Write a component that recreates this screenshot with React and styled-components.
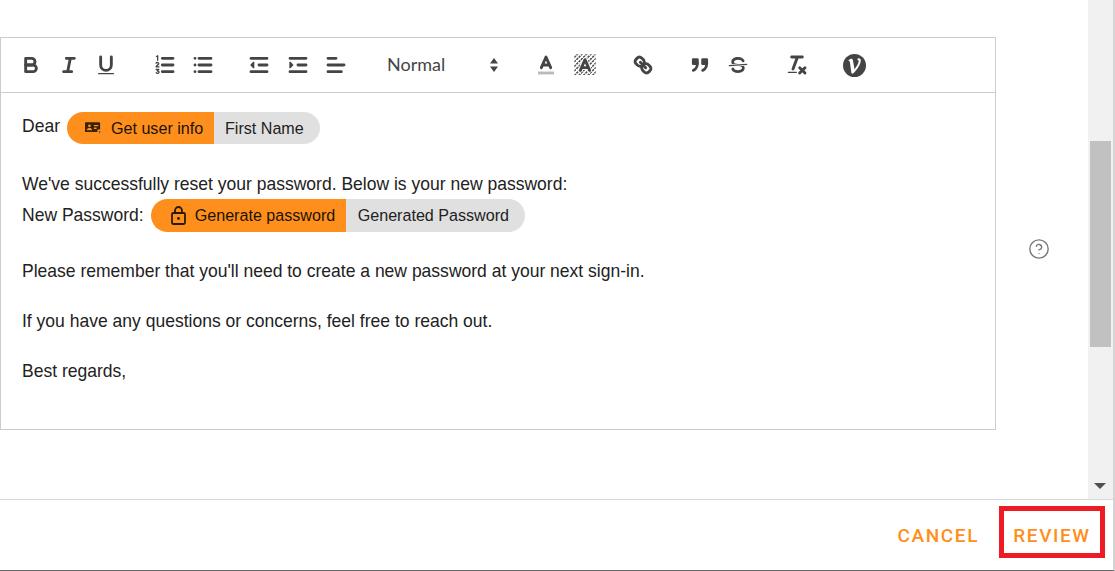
import React from 'react';
import styled, { createGlobalStyle } from 'styled-components';
import { CircleHelp } from 'lucide-react';

const GlobalStyle = createGlobalStyle`
  html, body {
    margin: 0;
    padding: 0;
    background: #fff;
    overflow: hidden;
  }
`;

const ink = '#444';
const orange = '#ff8f1c';

const Page = styled.div`
  width: 1115px;
  height: 571px;
  display: flex;
  flex-direction: column;
  box-sizing: border-box;
  border-right: 2px solid #d4d4d4;
  border-bottom: 1px solid #666;
  font-family: 'Liberation Sans', Arial, sans-serif;
  color: #222;
`;

const Scroller = styled.div`
  height: 499px;
  display: flex;
  flex-shrink: 0;
`;

const Body = styled.div`
  flex: 1;
  display: flex;
  align-items: flex-start;
  padding-top: 37px;
`;

const Editor = styled.div`
  width: 996px;
  height: 393px;
  box-sizing: border-box;
  border: 1px solid #ccc;
`;

const Toolbar = styled.div`
  height: 55px;
  box-sizing: border-box;
  border-bottom: 1px solid #ccc;
  padding-left: 18px;
  display: flex;
  align-items: center;
`;

const Group = styled.div`
  display: flex;
  gap: ${(p) => p.$gap || 14}px;
  margin-left: ${(p) => p.$before || 0}px;
`;

const Tool = styled.svg.attrs({ viewBox: '0 0 18 18' })`
  width: 24px;
  height: 24px;
  display: block;
  flex-shrink: 0;
  fill: none;
  stroke: ${ink};
  stroke-width: 2.15;
  stroke-linecap: round;
  stroke-linejoin: round;

  .fill {
    fill: ${ink};
    stroke: none;
  }
  .solid {
    fill: ${ink};
  }
  .thin {
    stroke-width: 1;
  }
`;

const Picker = styled.div`
  width: 118px;
  margin-left: 39px;
  display: flex;
  align-items: center;
  justify-content: space-between;
  font-family: Lato, sans-serif;
  font-size: 18px;
  color: ${ink};
`;

const PickerLabel = styled.span`
  padding-bottom: 3px;
`;

const PickerArrows = styled.svg.attrs({ viewBox: '0 0 10 16' })`
  width: 10px;
  height: 16px;
  fill: ${ink};
  margin-right: 6px;
`;

const VideoBadge = styled.svg.attrs({ viewBox: '0 0 22 22' })`
  width: 23px;
  height: 23px;
  display: block;
`;

const Content = styled.div`
  padding: 19px 0 0 21px;
  font-size: 17.53px;
`;

const Line = styled.div`
  display: flex;
  align-items: center;
  min-height: ${(p) => p.$height || 25}px;
  margin-bottom: ${(p) => p.$after || 0}px;
  line-height: 25px;
`;

const Label = styled.span`
  padding-bottom: ${(p) => p.$lift || 0}px;
`;

const Chip = styled.span`
  display: inline-flex;
  height: ${(p) => p.$height || 32}px;
  margin-left: 7px;
  border-radius: 17px;
  overflow: hidden;
  line-height: 1;
  font-size: 16.12px;

  > span {
    padding-top: ${(p) => p.$drop || 0}px;
  }
`;

const ChipAction = styled.span`
  display: flex;
  align-items: center;
  gap: ${(p) => p.$gap}px;
  padding-left: ${(p) => p.$pad}px;
  width: ${(p) => p.$width}px;
  box-sizing: border-box;
  background: ${orange};
  color: #1c1306;
`;

const ChipValue = styled.span`
  display: flex;
  align-items: center;
  padding-left: ${(p) => p.$pad}px;
  width: ${(p) => p.$width}px;
  box-sizing: border-box;
  background: #e0e0e0;
  color: #222;
`;

const HelpSlot = styled.div`
  width: 92px;
  padding: 201px 0 0 32px;
  box-sizing: border-box;
  color: #777;

  svg {
    display: block;
  }
`;

const Track = styled.div`
  width: 25px;
  background: #f1f1f1;
  display: flex;
  flex-direction: column;
  align-items: center;
  padding-top: 141px;
  box-sizing: border-box;
  position: relative;
`;

const Thumb = styled.div`
  width: 21px;
  height: 206px;
  background: #c1c1c1;
`;

const ArrowDown = styled.div`
  position: absolute;
  left: 6px;
  bottom: 10px;
  width: 0;
  height: 0;
  border-left: 6px solid transparent;
  border-right: 6px solid transparent;
  border-top: 6px solid #505050;
`;

const Footer = styled.div`
  flex: 1;
  border-top: 1px solid #d8d8d8;
  display: flex;
  align-items: center;
  justify-content: flex-end;
  padding-right: 8px;
  gap: 20px;
`;

const Action = styled.button`
  all: unset;
  font-family: Roboto, sans-serif;
  font-weight: 500;
  font-size: 19px;
  letter-spacing: 1.6px;
  color: ${orange};
`;

const Review = styled(Action)`
  width: 106px;
  height: 52px;
  box-sizing: border-box;
  border: 5px solid #ed1c24;
  margin-bottom: 6px;
  padding-top: 7px;
  display: flex;
  align-items: center;
  justify-content: center;
`;

const UserCard = () => (
  <svg width="16" height="13" viewBox="0 0 18 14">
    <path fill="#3a2204" d="M1 0h15a1 1 0 0 1 1 1v7h-3v3H1a1 1 0 0 1-1-1V1a1 1 0 0 1 1-1z" />
    <circle cx="5" cy="4" r="1.6" fill={orange} />
    <path fill={orange} d="M2 9c0-2 1.5-2.6 3-2.6S8 7 8 9zM10 3h5v1.5h-5zM10 6h3v1.5h-3z" />
    <path fill="#3a2204" d="M16 10h1.5l-1.5 3z" />
  </svg>
);

const Lock = () => (
  <svg width="15" height="19" viewBox="0 0 15 19" fill="none" stroke="#2a1a04" strokeWidth="1.8">
    <rect x="1" y="7" width="13" height="11" rx="1.2" />
    <path d="M4 7V4.5a3.5 3.5 0 0 1 7 0V7" />
    <circle cx="7.5" cy="12.5" r="1.4" fill="#2a1a04" stroke="none" />
  </svg>
);

const Toolbars = () => (
  <Toolbar>
    <Group $gap={13.5}>
      <Tool>
        <path d="M5,4H9.5A2.5,2.5,0,0,1,12,6.5v0A2.5,2.5,0,0,1,9.5,9H5V4Z" />
        <path d="M5,9h5.5A2.5,2.5,0,0,1,13,11.5v0A2.5,2.5,0,0,1,10.5,14H5V9Z" />
      </Tool>
      <Tool>
        <path d="M7 4h6M5 14h6M8 14l2-10" />
      </Tool>
      <Tool>
        <path d="M5,3V9a4,4,0,0,0,4,4h0a4,4,0,0,0,4-4V3" />
        <rect className="fill" x="3" y="15" width="12" height="1" rx=".5" />
      </Tool>
    </Group>
    <Group $before={35} $gap={13.5}>
      <Tool>
        <path d="M7 4h8M7 9h8M7 14h8" />
        <path className="thin" d="M2.6 2.6l.9-.5v3.4M2.3 7.6c.4-.7 2.1-.6 2 .4 0 .8-1.8 1.4-2 2.4h2.2M2.4 12.4h1.9l-1 1.1c1 0 1.3.4 1.2 1-.1.9-1.6 1-2.1.3" />
      </Tool>
      <Tool>
        <path d="M6 4h9M6 9h9M6 14h9M3 4h0M3 9h0M3 14h0" />
      </Tool>
    </Group>
    <Group $before={32.5} $gap={14.5}>
      <Tool>
        <path d="M3 14h12M3 4h12M9 9h6" />
        <polygon points="5 7 5 11 3 9" fill={ink} strokeWidth="1" />
      </Tool>
      <Tool>
        <path d="M3 14h12M3 4h12M9 9h6" />
        <polygon points="3 7 3 11 5 9" fill={ink} strokeWidth="1" />
      </Tool>
      <Tool>
        <path d="M3 9h12M3 14h10M3 4h6" />
      </Tool>
    </Group>
    <Picker>
      <PickerLabel>Normal</PickerLabel>
      <PickerArrows>
        <path d="M5 1L9 6.5H1zM5 15L1 9.5h8z" />
      </PickerArrows>
    </Picker>
    <Group $before={29} $gap={15}>
      <Tool>
        <path d="M3 15h12" stroke="#bbb" strokeLinecap="butt" />
        <path d="M5.5 11L9 3l3.5 8M11.63 9H6.38" />
      </Tool>
      <Tool>
        <defs>
          <pattern id="hatch" width="2.4" height="2.4" patternUnits="userSpaceOnUse" patternTransform="rotate(45)">
            <rect width="1.2" height="1.8" fill="#555" stroke="none" />
          </pattern>
        </defs>
        <rect x="1" y="1" width="16" height="15.5" fill="url(#hatch)" stroke="none" />
        <path d="M5.5 13L9 5l3.5 8M11.63 11H6.38" stroke="#fff" strokeWidth="3.4" />
        <path d="M5.5 13L9 5l3.5 8M11.63 11H6.38" />
      </Tool>
    </Group>
    <Group $before={33.5}>
      <Tool>
        <path d="M7 7l4 4" />
        <path d="M8.9,4.577a3.476,3.476,0,0,1,.36,4.679A3.476,3.476,0,0,1,4.577,8.9C3.185,7.5,2.035,6.4,4.217,4.217S7.5,3.185,8.9,4.577Z" />
        <path d="M13.423,9.1a3.476,3.476,0,0,0-4.679-.36,3.476,3.476,0,0,0,.36,4.679c1.392,1.392,2.5,2.542,4.679.36S14.815,10.5,13.423,9.1Z" />
      </Tool>
    </Group>
    <Group $before={33} $gap={14}>
      <Tool>
        <rect className="solid" x="4" y="5" width="3" height="3" />
        <rect className="solid" x="11" y="5" width="3" height="3" />
        <path d="M7,8c0,4.031-3,5-3,5M14,8c0,4.031-3,5-3,5" />
      </Tool>
      <Tool>
        <path className="thin" d="M15.5 8.5L2.5 9.5" />
        <path className="fill" d="M9.007,8C6.542,7.791,6,7.519,6,6.5,6,5.792,7.283,5,9,5c1.571,0,2.765.679,2.969,1.309a1,1,0,0,0,1.9-.617C13.356,4.106,11.354,3,9,3,6.2,3,4,4.538,4,6.5a3.2,3.2,0,0,0,.5,1.843Z" />
        <path className="fill" d="M8.984,10C11.457,10.208,12,10.479,12,11.5c0,.708-1.283,1.5-3,1.5-1.571,0-2.765-.679-2.969-1.309a1,1,0,1,0-1.9.617C4.644,13.894,6.646,15,9,15c2.8,0,5-1.538,5-3.5a3.2,3.2,0,0,0-.5-1.843Z" />
      </Tool>
    </Group>
    <Group $before={35}>
      <Tool>
        <path d="M5 3h8M6 12l3.35-9M11 11l4 4M15 11l-4 4" />
        <rect className="fill" x="2" y="14" width="7" height="1" rx=".5" />
      </Tool>
    </Group>
    <Group $before={34}>
      <VideoBadge>
        <circle cx="11" cy="11" r="11" fill={ink} />
        <path d="M5 7C6 4.5 8.5 3.5 9.5 6L11 14.5C13 12 15 9 15 7C15 6 14.2 5.5 13.5 5C14.5 3.5 17 3.6 17 6.2C17 10 13 15.5 10 18.5C9.2 19.3 8.3 19 8 18L6.6 8C6.4 6.8 5.8 6.6 5 7Z" fill="#fff" />
      </VideoBadge>
    </Group>
  </Toolbar>
);

export default function App() {
  return (
    <Page>
      <GlobalStyle />
      <Scroller>
        <Body>
          <Editor>
            <Toolbars />
            <Content>
              <Line $height={32} $after={28}>
                <Label $lift={4}>Dear</Label>
                <Chip $drop={1}>
                  <ChipAction $pad={18} $gap={10} $width={147}>
                    <UserCard />
                    Get user info
                  </ChipAction>
                  <ChipValue $pad={11} $width={106}>First Name</ChipValue>
                </Chip>
              </Line>
              <Line $after={2}>We've successfully reset your password. Below is your new password:</Line>
              <Line $height={33} $after={27}>
                <Label $lift={1}>New Password:</Label>
                <Chip $height={33}>
                  <ChipAction $pad={20} $gap={9} $width={195}>
                    <Lock />
                    Generate password
                  </ChipAction>
                  <ChipValue $pad={12} $width={179}>Generated Password</ChipValue>
                </Chip>
              </Line>
              <Line $after={25}>Please remember that you'll need to create a new password at your next sign-in.</Line>
              <Line $after={25}>If you have any questions or concerns, feel free to reach out.</Line>
              <Line>Best regards,</Line>
            </Content>
          </Editor>
          <HelpSlot>
            <CircleHelp size={22} strokeWidth={1.5} />
          </HelpSlot>
        </Body>
        <Track>
          <Thumb />
          <ArrowDown />
        </Track>
      </Scroller>
      <Footer>
        <Action>CANCEL</Action>
        <Review>REVIEW</Review>
      </Footer>
    </Page>
  );
}
